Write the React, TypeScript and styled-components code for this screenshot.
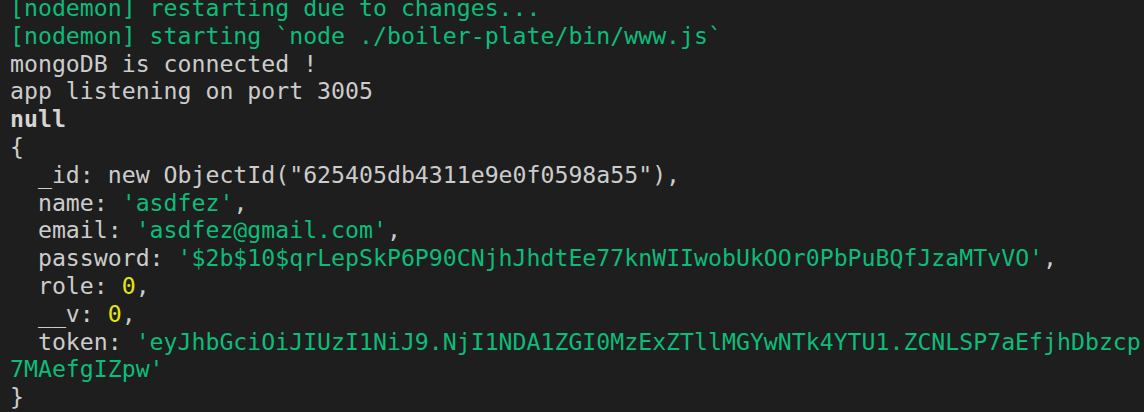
import React from "react";
import styled, { createGlobalStyle } from "styled-components";

const GlobalStyle = createGlobalStyle`
  html, body {
    margin: 0;
    padding: 0;
    background: #1e1e1e;
  }
  body {
    width: 1144px;
    height: 412px;
    overflow: hidden;
  }
`;

const Terminal = styled.div`
  box-sizing: border-box;
  width: 1144px;
  height: 412px;
  overflow: hidden;
  background: #1e1e1e;
  padding: 0 0 0 10px;
`;

const Output = styled.div`
  margin-top: -6px;
  display: flex;
  flex-direction: column;
  font-family: "DejaVu Sans Mono", "Liberation Mono", monospace;
  font-size: 23.2px;
  line-height: 27.8px;
  color: #cccccc;
`;

const Line = styled.div`
  white-space: pre;
  height: 27.8px;
`;

const Tone = styled.span<{ $tone: "green" | "yellow" | "bold" }>`
  color: ${(p) =>
    p.$tone === "green" ? "#0dbc79" : p.$tone === "yellow" ? "#e5e510" : "#d4d4d4"};
  font-weight: ${(p) => (p.$tone === "bold" ? 700 : 400)};
`;

export default function App() {
  return (
    <>
      <GlobalStyle />
      <Terminal>
        <Output>
          <Line>
            <Tone $tone="green">[nodemon] restarting due to changes...</Tone>
          </Line>
          <Line>
            <Tone $tone="green">[nodemon] starting `node ./boiler-plate/bin/www.js`</Tone>
          </Line>
          <Line>mongoDB is connected !</Line>
          <Line>app listening on port 3005</Line>
          <Line>
            <Tone $tone="bold">null</Tone>
          </Line>
          <Line>{"{"}</Line>
          <Line>{'  _id: new ObjectId("625405db4311e9e0f0598a55"),'}</Line>
          <Line>
            {"  name: "}
            <Tone $tone="green">'asdfez'</Tone>,
          </Line>
          <Line>
            {"  email: "}
            <Tone $tone="green">'asdfez@gmail.com'</Tone>,
          </Line>
          <Line>
            {"  password: "}
            <Tone $tone="green">'$2b$10$qrLepSkP6P90CNjhJhdtEe77knWIIwobUkOOr0PbPuBQfJzaMTvVO'</Tone>,
          </Line>
          <Line>
            {"  role: "}
            <Tone $tone="yellow">0</Tone>,
          </Line>
          <Line>
            {"  __v: "}
            <Tone $tone="yellow">0</Tone>,
          </Line>
          <Line>
            {"  token: "}
            <Tone $tone="green">'eyJhbGciOiJIUzI1NiJ9.NjI1NDA1ZGI0MzExZTllMGYwNTk4YTU1.ZCNLSP7aEfjhDbzcp</Tone>
          </Line>
          <Line>
            <Tone $tone="green">7MAefgIZpw'</Tone>
          </Line>
          <Line>{"}"}</Line>
        </Output>
      </Terminal>
    </>
  );
}
